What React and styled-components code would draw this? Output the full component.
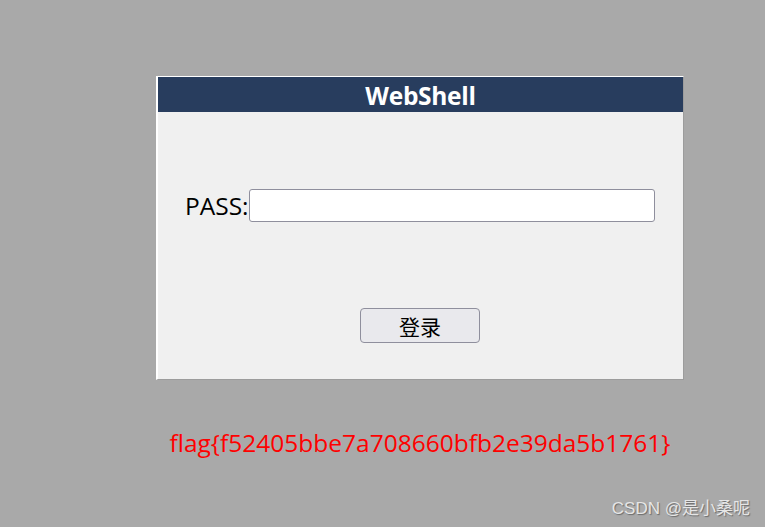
import React from "react";
import styled, { createGlobalStyle } from "styled-components";

const GlobalStyle = createGlobalStyle`
  html, body {
    margin: 0;
    padding: 0;
    background: #a9a9a9;
  }
  body {
    font-family: "Open Sans", "Noto Sans", "Noto Sans CJK SC", sans-serif;
  }
`;

const Page = styled.div`
  position: relative;
  height: 527px;
  overflow: hidden;
  padding: 76px 0 0 156px;
  box-sizing: border-box;
`;

const Column = styled.div`
  width: 528px;
  display: flex;
  flex-direction: column;
`;

const Panel = styled.div`
  height: 304px;
  box-sizing: border-box;
  background: #f0f0f0;
  border-top: 1px solid #ffffff;
  border-left: 2px solid #ffffff;
  border-right: 1px solid #9c9c9c;
  border-bottom: 1px solid #9c9c9c;
  display: flex;
  flex-direction: column;
`;

const Header = styled.div`
  height: 35px;
  background: #283d5e;
  color: #ffffff;
  font-weight: 700;
  font-size: 24.5px;
  display: flex;
  align-items: center;
  justify-content: center;
  letter-spacing: -0.3px;
  padding-top: 1px;
  box-sizing: border-box;
`;

const Row = styled.div`
  display: flex;
  align-items: center;
  padding: 0 28px 0 27px;
  margin-top: 77px;
`;

const Label = styled.label`
  font-size: 24.5px;
  color: #000;
`;

const Input = styled.input`
  flex: 1;
  height: 33px;
  box-sizing: border-box;
  border: 1px solid #8f8f9d;
  border-radius: 3px;
  background: #fff;
  outline: none;
`;

const Actions = styled.div`
  display: flex;
  justify-content: center;
  margin-top: 86px;
  padding-right: 1px;
`;

const Button = styled.button`
  width: 120px;
  height: 35px;
  background: #e9e9ed;
  border: 1px solid #8f8f9d;
  border-radius: 4px;
  font-family: "Noto Sans CJK SC", sans-serif;
  font-size: 21px;
  color: #000;
  padding: 0;
`;

const Flag = styled.div`
  margin-top: 46px;
  text-align: center;
  white-space: nowrap;
  color: #ff0000;
  font-size: 24.5px;
`;

const Watermark = styled.div`
  position: absolute;
  right: 15px;
  bottom: 8px;
  font-family: "Liberation Sans", "Noto Sans CJK SC", sans-serif;
  font-size: 17px;
  color: #e6e6e6;
  text-shadow: 1px 1px 1px #6a6a6a;
`;

export default function App() {
  return (
    <>
      <GlobalStyle />
      <Page>
        <Column>
          <Panel>
            <Header>WebShell</Header>
            <Row>
              <Label>PASS:</Label>
              <Input type="password" />
            </Row>
            <Actions>
              <Button>登录</Button>
            </Actions>
          </Panel>
          <Flag>flag{"{"}f52405bbe7a708660bfb2e39da5b1761{"}"}</Flag>
        </Column>
        <Watermark>CSDN @是小桑呢</Watermark>
      </Page>
    </>
  );
}
